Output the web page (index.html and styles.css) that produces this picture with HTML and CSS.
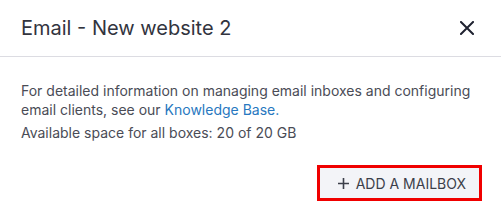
FILE: index.html
```html
<!DOCTYPE html>
<html lang="en">
<head>
    <meta charset="UTF-8">
    <meta name="viewport" content="width=device-width, initial-scale=1.0">
    <title>Email - New website 2</title>
    <link rel="stylesheet" href="styles.css">
</head>
<body>

    <div class="dialog">
        <div class="dialog-header">
            <h1>Email - New website 2</h1>
            <button type="button" class="close" aria-label="Close">
                <svg width="14" height="14" viewBox="0 0 14 14">
                    <path d="M1 1L13 13M13 1L1 13" stroke="#1f2230" stroke-width="2" stroke-linecap="square"/>
                </svg>
            </button>
        </div>

        <div class="dialog-body">
            <p>For detailed information on managing email inboxes and configuring email clients, see our <a href="#">Knowledge Base.</a></p>
            <p>Available space for all boxes: 20 of 20 GB</p>

            <div class="actions">
                <button type="button" class="add-button">
                    <svg class="plus" width="11" height="11" viewBox="0 0 11 11">
                        <path d="M5.5 0V11M0 5.5H11" stroke="#3c3f4a" stroke-width="1.6"/>
                    </svg>
                    ADD A MAILBOX
                </button>
            </div>
        </div>
    </div>

</body>
</html>
```

FILE: styles.css
```css
body {
    margin: 0;
    font-family: Inter, "Noto Sans", sans-serif;
    background-color: #ffffff;
    color: #4a4c56;
}

.dialog {
    width: 501px;
    height: 222px;
}

.dialog-header {
    display: flex;
    align-items: center;
    justify-content: space-between;
    height: 56px;
    padding: 0 27px 0 21px;
    border-bottom: 1px solid #dcdce2;
}

.dialog-header h1 {
    margin: 0;
    font-size: 20px;
    font-weight: 400;
    color: #32343e;
}

.close {
    border: none;
    background: none;
    padding: 0;
    width: 14px;
    height: 14px;
    display: flex;
}

.dialog-body {
    padding: 24px 22px 0 21px;
}

.dialog-body p {
    margin: 0 0 4px;
    font-size: 14px;
    line-height: 19px;
}

.dialog-body a {
    color: #2878c0;
    text-decoration: none;
}

.actions {
    display: flex;
    justify-content: flex-end;
    margin-top: 26px;
}

.add-button {
    display: flex;
    align-items: center;
    height: 30px;
    padding: 0 13px 0 18px;
    font-family: Inter, "Noto Sans", sans-serif;
    font-size: 14px;
    color: #3c3f4a;
    background-color: #f3f4f8;
    border: none;
    outline: 3px solid #f00000;
}

.plus {
    margin-right: 7px;
}
```
